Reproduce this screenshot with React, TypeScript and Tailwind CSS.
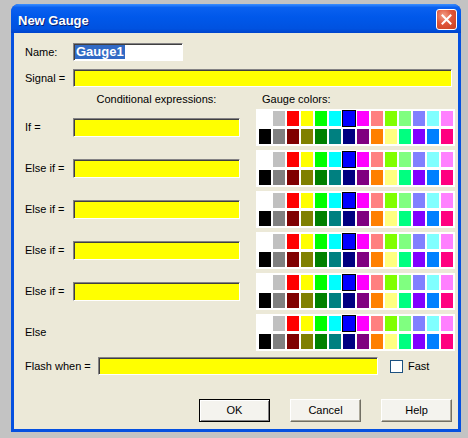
import React from "react";

// Two rows of the 28-colour palette offered for each gauge state
const TOP_COLORS = [
  "#ffffff", "#c0c0c0", "#ff0000", "#ffff00", "#00ff00", "#00ffff", "#0000ff",
  "#ff00ff", "#ff8080", "#80ff00", "#80ff80", "#8080ff", "#80ffff", "#ff80ff",
];
const BOTTOM_COLORS = [
  "#000000", "#808080", "#800000", "#808000", "#008000", "#008080", "#000080",
  "#800080", "#ff8000", "#ffff80", "#00ff80", "#8000ff", "#0080ff", "#ff0080",
];

const CONDITIONS = ["If =", "Else if =", "Else if =", "Else if =", "Else if =", "Else"];

function Field({ className = "", children }: { className?: string; children?: React.ReactNode }) {
  return (
    <div
      className={`h-[18px] border-t border-l border-t-[#848284] border-l-[#848284] border-b border-r border-b-white border-r-white shadow-[inset_1px_1px_0_#404040] ${className}`}
    >
      {children}
    </div>
  );
}

function Palette({ selected }: { selected: number }) {
  return (
    <div className="ml-[16px] flex w-[199px] flex-col gap-[3px] bg-white p-[2px] pl-[3px]">
      {[TOP_COLORS, BOTTOM_COLORS].map((row, r) => (
        <div key={r} className="flex gap-[2px]">
          {row.map((c, i) => (
            <div
              key={c}
              className={`h-[15px] w-[12px] ${r === 0 && i === selected ? "ring-1 ring-black" : ""}`}
              style={{ backgroundColor: c }}
            />
          ))}
        </div>
      ))}
    </div>
  );
}

function Button({ label, primary }: { label: string; primary?: boolean }) {
  return (
    <button
      className={`h-[23px] w-[71px] bg-[#f4f3ee] text-[11px] text-black ${
        primary
          ? "border border-black shadow-[inset_1px_1px_0_#ffffff,inset_-1px_-1px_0_#848284]"
          : "border border-t-white border-l-white border-b-[#716f64] border-r-[#716f64] shadow-[inset_-1px_-1px_0_#aca899]"
      }`}
    >
      {label}
    </button>
  );
}

export default function App() {
  return (
    <div className="h-[438px] w-[468px] overflow-hidden bg-[#c3c3c3] pl-[11px] pt-[4px] font-['Liberation_Sans',Arial,sans-serif] text-[11px] text-black">
      <div className="flex h-[428px] w-[450px] flex-col rounded-t-[8px] bg-[#0450e0] px-[3px] pb-[3px]">
        {/* Title bar */}
        <div className="-mx-[3px] flex h-[29px] items-center justify-between rounded-t-[8px] bg-[linear-gradient(to_bottom,#3c8fff_0%,#0a61f0_12%,#0058ea_45%,#0052e0_85%,#0044cc_100%)] pl-[7px] pr-[4px]">
          <span className="mt-[4px] text-[13px] font-bold text-white [text-shadow:1px_1px_0_#0a1e6e]">New Gauge</span>
          <div className="mt-[1px] flex h-[21px] w-[21px] items-center justify-center rounded-[3px] border border-white bg-[radial-gradient(circle_at_35%_30%,#f2a088_0%,#e0563a_45%,#c8401f_100%)]">
            <svg width="11" height="11" viewBox="0 0 11 11">
              <path d="M1.5 1.5 L9.5 9.5 M9.5 1.5 L1.5 9.5" stroke="white" strokeWidth="2" strokeLinecap="square" />
            </svg>
          </div>
        </div>

        {/* Client area */}
        <div className="flex flex-1 flex-col bg-[#ece9d8] pl-[11px] pt-[10px]">
          <div className="flex h-[18px] items-center">
            <span className="w-[48px]">Name:</span>
            <Field className="flex w-[110px] items-center bg-white pl-[1px]">
              <span className="bg-[#316ac5] px-[1px] text-[13px] font-bold leading-[14px] text-white">Gauge1</span>
            </Field>
          </div>

          <div className="mt-[8px] flex h-[18px] items-center">
            <span className="w-[48px]">Signal =</span>
            <Field className="w-[379px] bg-[#ffff00]" />
          </div>

          <div className="mt-[5px] flex h-[14px] items-center">
            <span className="w-[215px] pl-[48px] text-center">Conditional expressions:</span>
            <span className="ml-[22px]">Gauge colors:</span>
          </div>

          <div className="mt-[3px] flex flex-col gap-[4px]">
            {CONDITIONS.map((label, i) => (
              <div key={i} className="flex h-[37px] items-center">
                <span className="w-[48px]">{label}</span>
                {label === "Else" ? (
                  <div className="w-[167px]" />
                ) : (
                  <Field className="h-[19px] w-[167px] bg-[#ffff00]" />
                )}
                <Palette selected={6} />
              </div>
            ))}
          </div>

          <div className="mt-[6px] flex h-[18px] items-center">
            <span className="w-[73px]">Flash when =</span>
            <Field className="w-[280px] bg-[#ffff00]" />
            <div className="ml-[12px] h-[13px] w-[13px] border border-[#1c5180] bg-white" />
            <span className="ml-[5px]">Fast</span>
          </div>

          <div className="ml-[174px] mt-[24px] flex gap-[20px]">
            <Button label="OK" primary />
            <Button label="Cancel" />
            <Button label="Help" />
          </div>
        </div>
      </div>
    </div>
  );
}
